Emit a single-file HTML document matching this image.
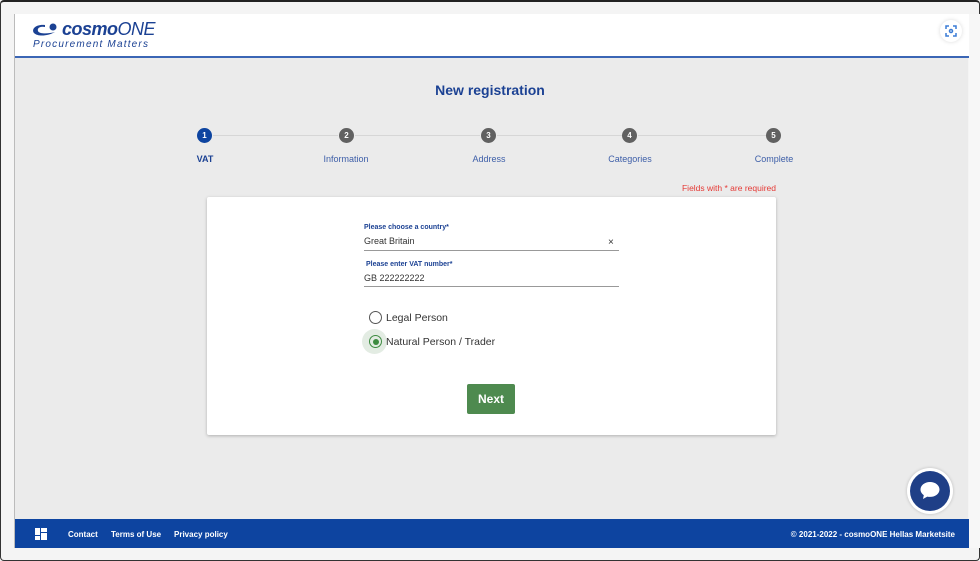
<!DOCTYPE html>
<html><head><meta charset="utf-8"><style>
*{margin:0;padding:0;box-sizing:border-box}
body{width:980px;height:561px;background:#f4f4f4;font-family:"Liberation Sans",Arial,sans-serif;position:relative;overflow:hidden}
.frame{position:absolute;left:0;top:0;width:980px;height:561px;border:1px solid #333;border-radius:4px;border-top:2px solid #222}
.page{position:absolute;left:14px;top:14px;width:954px;height:534px;background:#ebebeb;border-left:1px solid #bbb}
.header{position:absolute;left:0;top:0;width:954px;height:44px;background:#fff;border-bottom:2px solid #3b66b5}
.footer{position:absolute;left:0;top:505px;width:954px;height:29px;background:#0d44a0;color:#fff;font-size:8px;font-weight:bold}
.footer span{position:absolute;top:11px}
.title{position:absolute;top:82px;left:0;width:980px;text-align:center;color:#1b4193;font-weight:bold;font-size:14px}
.step{position:absolute;top:128px;width:15px;height:15px;border-radius:50%;background:#616161;color:#fff;font-size:8px;font-weight:bold;text-align:center;line-height:15px}
.lbl{position:absolute;top:154px;font-size:9px;color:#3d5ea8;width:100px;text-align:center}
.line{position:absolute;top:135px;height:1px;background:#d6d6d6}
.card{position:absolute;left:207px;top:197px;width:569px;height:238px;background:#fff;border-radius:2px;box-shadow:0 1px 3px rgba(0,0,0,.25)}
.fl{position:absolute;font-size:7px;font-weight:bold;color:#1b4193}
.fv{position:absolute;font-size:9px;color:#333}
.ul{position:absolute;height:1px;background:#999;left:364px;width:255px}
.radio{position:absolute;width:13px;height:13px;border-radius:50%;border:1.5px solid #555}
</style></head><body>
<div class="frame"></div>
<div class="page">
 <div class="header">
  <svg style="position:absolute;left:16px;top:8px" width="36" height="16" viewBox="0 0 36 16"><path d="M14 3 C5 2 0 7 3 11 C7 15 17 14 24 10 C17 12 8 12 7 9 C6 6 9 4 14 5 Z" fill="#1b4193"/><circle cx="22" cy="5" r="3.5" fill="#1b4193"/></svg>
  <div style="position:absolute;left:47px;top:5px;font-size:18px;font-style:italic;color:#1b4193;letter-spacing:-0.5px"><b>cosmo</b>ONE</div>
  <div style="position:absolute;left:18px;top:25px;font-size:10px;font-style:italic;color:#1b4193;letter-spacing:1.2px">Procurement Matters</div>
  <div style="position:absolute;left:925px;top:6px;width:22px;height:22px;border-radius:50%;background:#fff;box-shadow:0 0 4px rgba(0,0,0,.15)">
   <svg width="22" height="22" viewBox="0 0 22 22" fill="none" stroke="#3a7bd5" stroke-width="1.5"><path d="M6 9V6h3M13 6h3v3M16 13v3h-3M9 16H6v-3"/><circle cx="11" cy="11" r="1.5"/></svg>
  </div>
 </div>
 <div class="footer">
  <svg style="position:absolute;left:20px;top:9px" width="12" height="12" viewBox="0 0 12 12" fill="#fff"><rect x="0" y="0" width="5" height="7"/><rect x="6" y="0" width="6" height="4"/><rect x="0" y="8" width="5" height="4"/><rect x="6" y="5" width="6" height="7"/></svg>
  <span style="left:53px">Contact</span><span style="left:96px">Terms of Use</span><span style="left:159px">Privacy policy</span>
  <span style="right:14px">© 2021-2022 - cosmoONE Hellas Marketsite</span>
 </div>
</div>
<div style="position:absolute;left:969px;top:14px;width:11px;height:534px;background:#f7f7f7"></div>
<div class="title">New registration</div>
<div class="line" style="left:213px;width:125px"></div>
<div class="line" style="left:355px;width:125px"></div>
<div class="line" style="left:497px;width:125px"></div>
<div class="line" style="left:638px;width:128px"></div>
<div class="step" style="left:197px;background:#0d44a0">1</div>
<div class="step" style="left:339px">2</div>
<div class="step" style="left:481px">3</div>
<div class="step" style="left:622px">4</div>
<div class="step" style="left:766px">5</div>
<div class="lbl" style="left:155px;font-weight:bold;color:#1b4193">VAT</div>
<div class="lbl" style="left:296px">Information</div>
<div class="lbl" style="left:439px">Address</div>
<div class="lbl" style="left:580px">Categories</div>
<div class="lbl" style="left:724px">Complete</div>
<div style="position:absolute;right:204px;top:183px;font-size:8.5px;color:#e53935">Fields with * are required</div>
<div class="card"></div>
<div class="fl" style="left:364px;top:224px">Please choose a country*</div>
<div class="fv" style="left:364px;top:236px">Great Britain</div>
<div class="fv" style="left:608px;top:237px;font-size:10px">×</div>
<div class="ul" style="top:250px"></div>
<div class="fl" style="left:366px;top:261px">Please enter VAT number*</div>
<div class="fv" style="left:364px;top:273px">GB 222222222</div>
<div class="ul" style="top:286px"></div>
<div class="radio" style="left:369px;top:311px"></div>
<div style="position:absolute;left:386px;top:312px;font-size:10.5px;color:#333">Legal Person</div>
<div style="position:absolute;left:362px;top:329px;width:25px;height:25px;border-radius:50%;background:#e3ece3"></div>
<div class="radio" style="left:369px;top:335px;border-color:#3d8b40"></div>
<div style="position:absolute;left:372.5px;top:338.5px;width:6px;height:6px;border-radius:50%;background:#3d8b40"></div>
<div style="position:absolute;left:386px;top:336px;font-size:10.5px;color:#333">Natural Person / Trader</div>
<div style="position:absolute;left:467px;top:384px;width:48px;height:30px;background:#4e8a4f;border-radius:2px;color:#fff;font-weight:bold;font-size:12px;text-align:center;line-height:30px">Next</div>
<div style="position:absolute;left:907px;top:468px;width:46px;height:46px;border-radius:50%;background:#fff;box-shadow:0 0 3px rgba(0,0,0,.2)">
 <div style="position:absolute;left:3px;top:3px;width:40px;height:40px;border-radius:50%;background:#1f3f87"></div>
 <svg style="position:absolute;left:11px;top:12px" width="24" height="22" viewBox="0 0 24 22"><path d="M12 2C6.5 2 2.5 5.5 2.5 9.5c0 2.3 1.3 4.3 3.3 5.6L5 19l4.3-2.4c.9.2 1.8.3 2.7.3 5.5 0 9.5-3.3 9.5-7.4S17.5 2 12 2z" fill="#fff"/></svg>
</div>
</body></html>
